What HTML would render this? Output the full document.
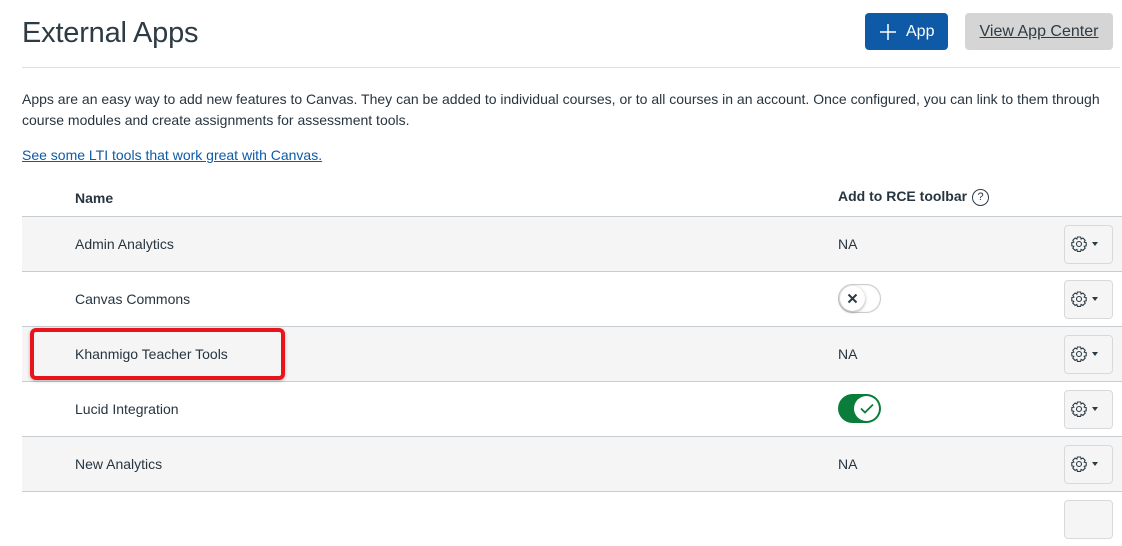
<!DOCTYPE html>
<html><head><meta charset="utf-8"><style>
*{margin:0;padding:0;box-sizing:border-box}
body{width:1122px;height:500px;overflow:hidden;background:#fff;font-family:"Liberation Sans",sans-serif;color:#273540;position:relative}
.a{position:absolute;white-space:nowrap}
h1{position:absolute;left:22px;top:17px;font-size:29px;font-weight:normal;color:#2d3b45;letter-spacing:-0.2px}
.btn1{position:absolute;left:865px;top:13px;width:83px;height:37px;background:#0e5aa7;border-radius:4px;color:#fff;font-size:16px}
.btn2{position:absolute;left:965px;top:13px;width:148px;height:37px;background:#d5d5d5;border-radius:4px;color:#2d3b45;font-size:16px;text-decoration:underline;text-align:center;line-height:37px}
.hr{position:absolute;left:22px;width:1098px;height:1px;background:#dde1e4}
.p{position:absolute;left:22px;font-size:14px;line-height:21px;width:1100px}
.row{position:absolute;left:22px;width:1100px;height:55px;border-top:1px solid #c7cdd1}
.row.g{background:#f5f5f5}
.nm{position:absolute;left:53px;top:19px;font-size:14px}
.na{position:absolute;left:816px;top:19px;font-size:14px}
.gear{position:absolute;left:1042px;top:8px;width:49px;height:39px;border:1px solid #d7dadd;border-radius:4px;background:#f5f5f5}
</style></head><body>
<h1>External Apps</h1>
<div class="btn1"><svg class="a" style="left:14px;top:10px" width="18" height="18"><path d="M9,1V17M1,9H17" stroke="#fff" stroke-width="1.5"/></svg><span class="a" style="left:41px;top:10px">App</span></div>
<div class="btn2">View App Center</div>
<div class="hr" style="top:67px"></div>
<div class="p" style="top:89px">Apps are an easy way to add new features to Canvas. They can be added to individual courses, or to all courses in an account. Once configured, you can link to them through<br>course modules and create assignments for assessment tools.</div>
<div class="p" style="top:145px;color:#0e5aa7;text-decoration:underline">See some LTI tools that work great with Canvas.</div>
<div class="a" style="left:75px;top:190px;font-size:14px;font-weight:bold">Name</div>
<div class="a" style="left:838px;top:188px;font-size:14px;font-weight:bold">Add to RCE toolbar</div>
<div class="a" style="left:972px;top:189px;width:17px;height:17px;border:1.3px solid #2d3b45;border-radius:50%;font-size:11px;text-align:center;line-height:15px">?</div>

<div class="row g" style="top:216px"><span class="nm">Admin Analytics</span><span class="na">NA</span><div class="gear"></div></div>
<div class="row" style="top:271px"><span class="nm">Canvas Commons</span><div class="a" style="left:816px;top:12px;width:43px;height:29px;border-radius:15px;background:#fff;border:1px solid #c7cdd1;box-shadow:inset 0 0 2px rgba(0,0,0,.1)"><div class="a" style="left:1px;top:1px;width:25px;height:25px;border-radius:50%;background:#fff;box-shadow:0 1px 3px rgba(0,0,0,.35)"><svg class="a" style="left:7px;top:7px" width="11" height="11"><path d="M1.5,1.5L9.5,9.5M9.5,1.5L1.5,9.5" stroke="#2d3b45" stroke-width="2"/></svg></div></div><div class="gear"></div></div>
<div class="row g" style="top:326px"><span class="nm">Khanmigo Teacher Tools</span><span class="na">NA</span><div class="gear"></div></div>
<div class="row" style="top:381px"><span class="nm">Lucid Integration</span><div class="a" style="left:816px;top:12px;width:43px;height:29px;border-radius:15px;background:#0b7d3a"><div class="a" style="left:16px;top:2px;width:25px;height:25px;border-radius:50%;background:#fff"><svg class="a" style="left:6px;top:7px" width="14" height="11"><path d="M1,5.5L5,9.5L13,1.5" fill="none" stroke="#0b7d3a" stroke-width="1.8"/></svg></div></div><div class="gear"></div></div>
<div class="row g" style="top:436px"><span class="nm">New Analytics</span><span class="na">NA</span><div class="gear"></div></div>
<div class="row" style="top:491px"><div class="gear"></div></div>

<div class="a" style="left:30px;top:328px;width:255px;height:52px;border:4px solid #e8141b;border-radius:6px;box-shadow:0 1px 3px rgba(0,0,0,.3)"></div>

<svg class="a" style="left:0;top:0" width="1122" height="500">
<defs><g id="gr"><g fill="none" stroke="#2d3b45" stroke-width="1.1">
<path d="M-1.6,-7 h3.2 l0.5,2 l1.8,-1 l2.3,2.3 l-1,1.8 l2,0.5 v3.2 l-2,0.5 l1,1.8 l-2.3,2.3 l-1.8,-1 l-0.5,2 h-3.2 l-0.5,-2 l-1.8,1 l-2.3,-2.3 l1,-1.8 l-2,-0.5 v-3.2 l2,-0.5 l-1,-1.8 l2.3,-2.3 l1.8,1 z"/>
<circle r="2.5"/></g><path d="M13,-2 h6 l-3,4 z" fill="#2d3b45"/></g></defs>
<use href="#gr" x="1079" y="244"/><use href="#gr" x="1079" y="299"/><use href="#gr" x="1079" y="354"/><use href="#gr" x="1079" y="409"/><use href="#gr" x="1079" y="464"/>
</svg>
</body></html>
